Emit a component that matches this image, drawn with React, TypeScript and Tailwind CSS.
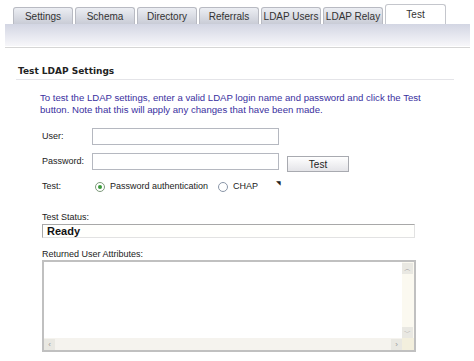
import React from "react";

const tabs = ["Settings", "Schema", "Directory", "Referrals", "LDAP Users", "LDAP Relay", "Test"];

export default function App() {
  return (
    <div className="w-[474px] h-[361px] bg-white overflow-hidden" style={{ fontFamily: '"Liberation Sans", Arial, sans-serif' }}>
      {/* tab strip */}
      <div className="flex items-end gap-[2px] pl-[13px] pt-[4px] h-[24px]">
        {tabs.map((t) =>
          t === "Test" ? (
            <div
              key={t}
              className="w-[61px] h-[20px] flex items-center justify-center whitespace-nowrap text-[10px] text-[#333] bg-white border border-b-0 border-[#c4c6cc] rounded-t-[3px]"
            >
              {t}
            </div>
          ) : (
            <div
              key={t}
              className="w-[60px] h-[17px] flex items-center justify-center whitespace-nowrap text-[10px] text-[#333] bg-gradient-to-b from-[#eceef3] to-[#c9ccd6] border border-b-0 border-[#b8bac2] rounded-t-[3px]"
            >
              {t}
            </div>
          )
        )}
      </div>
      {/* sub bar */}
      <div className="ml-[5px] mr-[4px] h-[22px] bg-gradient-to-b from-[#d3d6e3] to-[#f7f7fa]" />
      <div className="ml-[5px] mr-[4px] h-[1px] mt-[1px] bg-[#d6d6d6]" />

      {/* section */}
      <div className="pl-[18px] pr-[20px] mt-[17px]">
        <div className="text-[9px] font-bold text-[#222] leading-[12px]" style={{ fontFamily: '"DejaVu Sans", Verdana, sans-serif' }}>
          Test LDAP Settings
        </div>
        <div className="h-[1px] bg-[#e4e4e8] -ml-[2px] mt-[2px]" />
      </div>

      <div className="ml-[40px] w-[390px] mt-[12px] text-[9.6px] leading-[12px] text-[#3a30a0]">
        To test the LDAP settings, enter a valid LDAP login name and password and click the Test button. Note that this will apply any changes that have been made.
      </div>

      <div className="pl-[42px] mt-[12px] text-[9px] text-[#222]">
        <div className="flex items-center h-[17px]">
          <span className="w-[50px]">User:</span>
          <div className="w-[187px] h-[17px] border border-[#b5b8c0] bg-white" />
        </div>
        <div className="flex items-center h-[17px] mt-[8px]">
          <span className="w-[50px]">Password:</span>
          <div className="w-[187px] h-[17px] border border-[#b5b8c0] bg-white" />
          <div className="ml-[8px] mt-[5px] w-[62px] h-[16px] border border-[#a8aab0] bg-gradient-to-b from-white to-[#e4e4e8] flex items-center justify-center text-[10px] text-[#222]">
            Test
          </div>
        </div>
        <div className="flex items-center h-[16px] mt-[9px]">
          <span className="w-[53px]">Test:</span>
          <span className="w-[10px] h-[10px] rounded-full border border-[#7d9a7a] bg-white flex items-center justify-center">
            <span className="w-[4px] h-[4px] rounded-full bg-[#3c9a3c]" />
          </span>
          <span className="ml-[5px]">Password authentication</span>
          <span className="ml-[10px] w-[10px] h-[10px] rounded-full border border-[#8a96a8] bg-white" />
          <span className="ml-[5px]">CHAP</span>
          <span className="ml-[18px] -mt-[8px] text-[6px] leading-none text-[#222]">◥</span>
        </div>

        <div className="mt-[16px] leading-[12px]">Test Status:</div>
        <div className="mt-[1px] w-[373px] h-[14px] border-t border-l border-[#a8a8a8] border-r border-b border-r-[#e2e2e2] border-b-[#e2e2e2] bg-[#fffffd] flex items-center pl-[4px] text-[11px] font-bold text-[#111]">
          Ready
        </div>

        <div className="mt-[10px] leading-[12px]">Returned User Attributes:</div>
        <div className="mt-[0px] w-[374px] h-[92px] border-2 border-[#c0c0c0] bg-white flex">
          <div className="flex-1 flex flex-col">
            <div className="flex-1" />
            <div className="h-[12px] bg-[#f5f3ee] flex items-center justify-between">
              <span className="w-[11px] h-[11px] bg-[#e9e8e2] text-[8px] leading-[11px] text-[#999] text-center">‹</span>
              <span className="w-[11px] h-[11px] bg-[#e9e8e2] text-[8px] leading-[11px] text-[#999] text-center">›</span>
            </div>
          </div>
          <div className="w-[12px] bg-[#fbf9f0] flex flex-col justify-between">
            <span className="w-[11px] h-[11px] mt-[1px] bg-[#e9e8e2] text-[7px] leading-[11px] text-[#999] text-center">︿</span>
            <div className="flex flex-col">
              <span className="w-[11px] h-[11px] bg-[#e9e8e2] text-[7px] leading-[11px] text-[#999] text-center">﹀</span>
              <span className="w-[12px] h-[12px] bg-[#f3efdd]" />
            </div>
          </div>
        </div>
      </div>
    </div>
  );
}
